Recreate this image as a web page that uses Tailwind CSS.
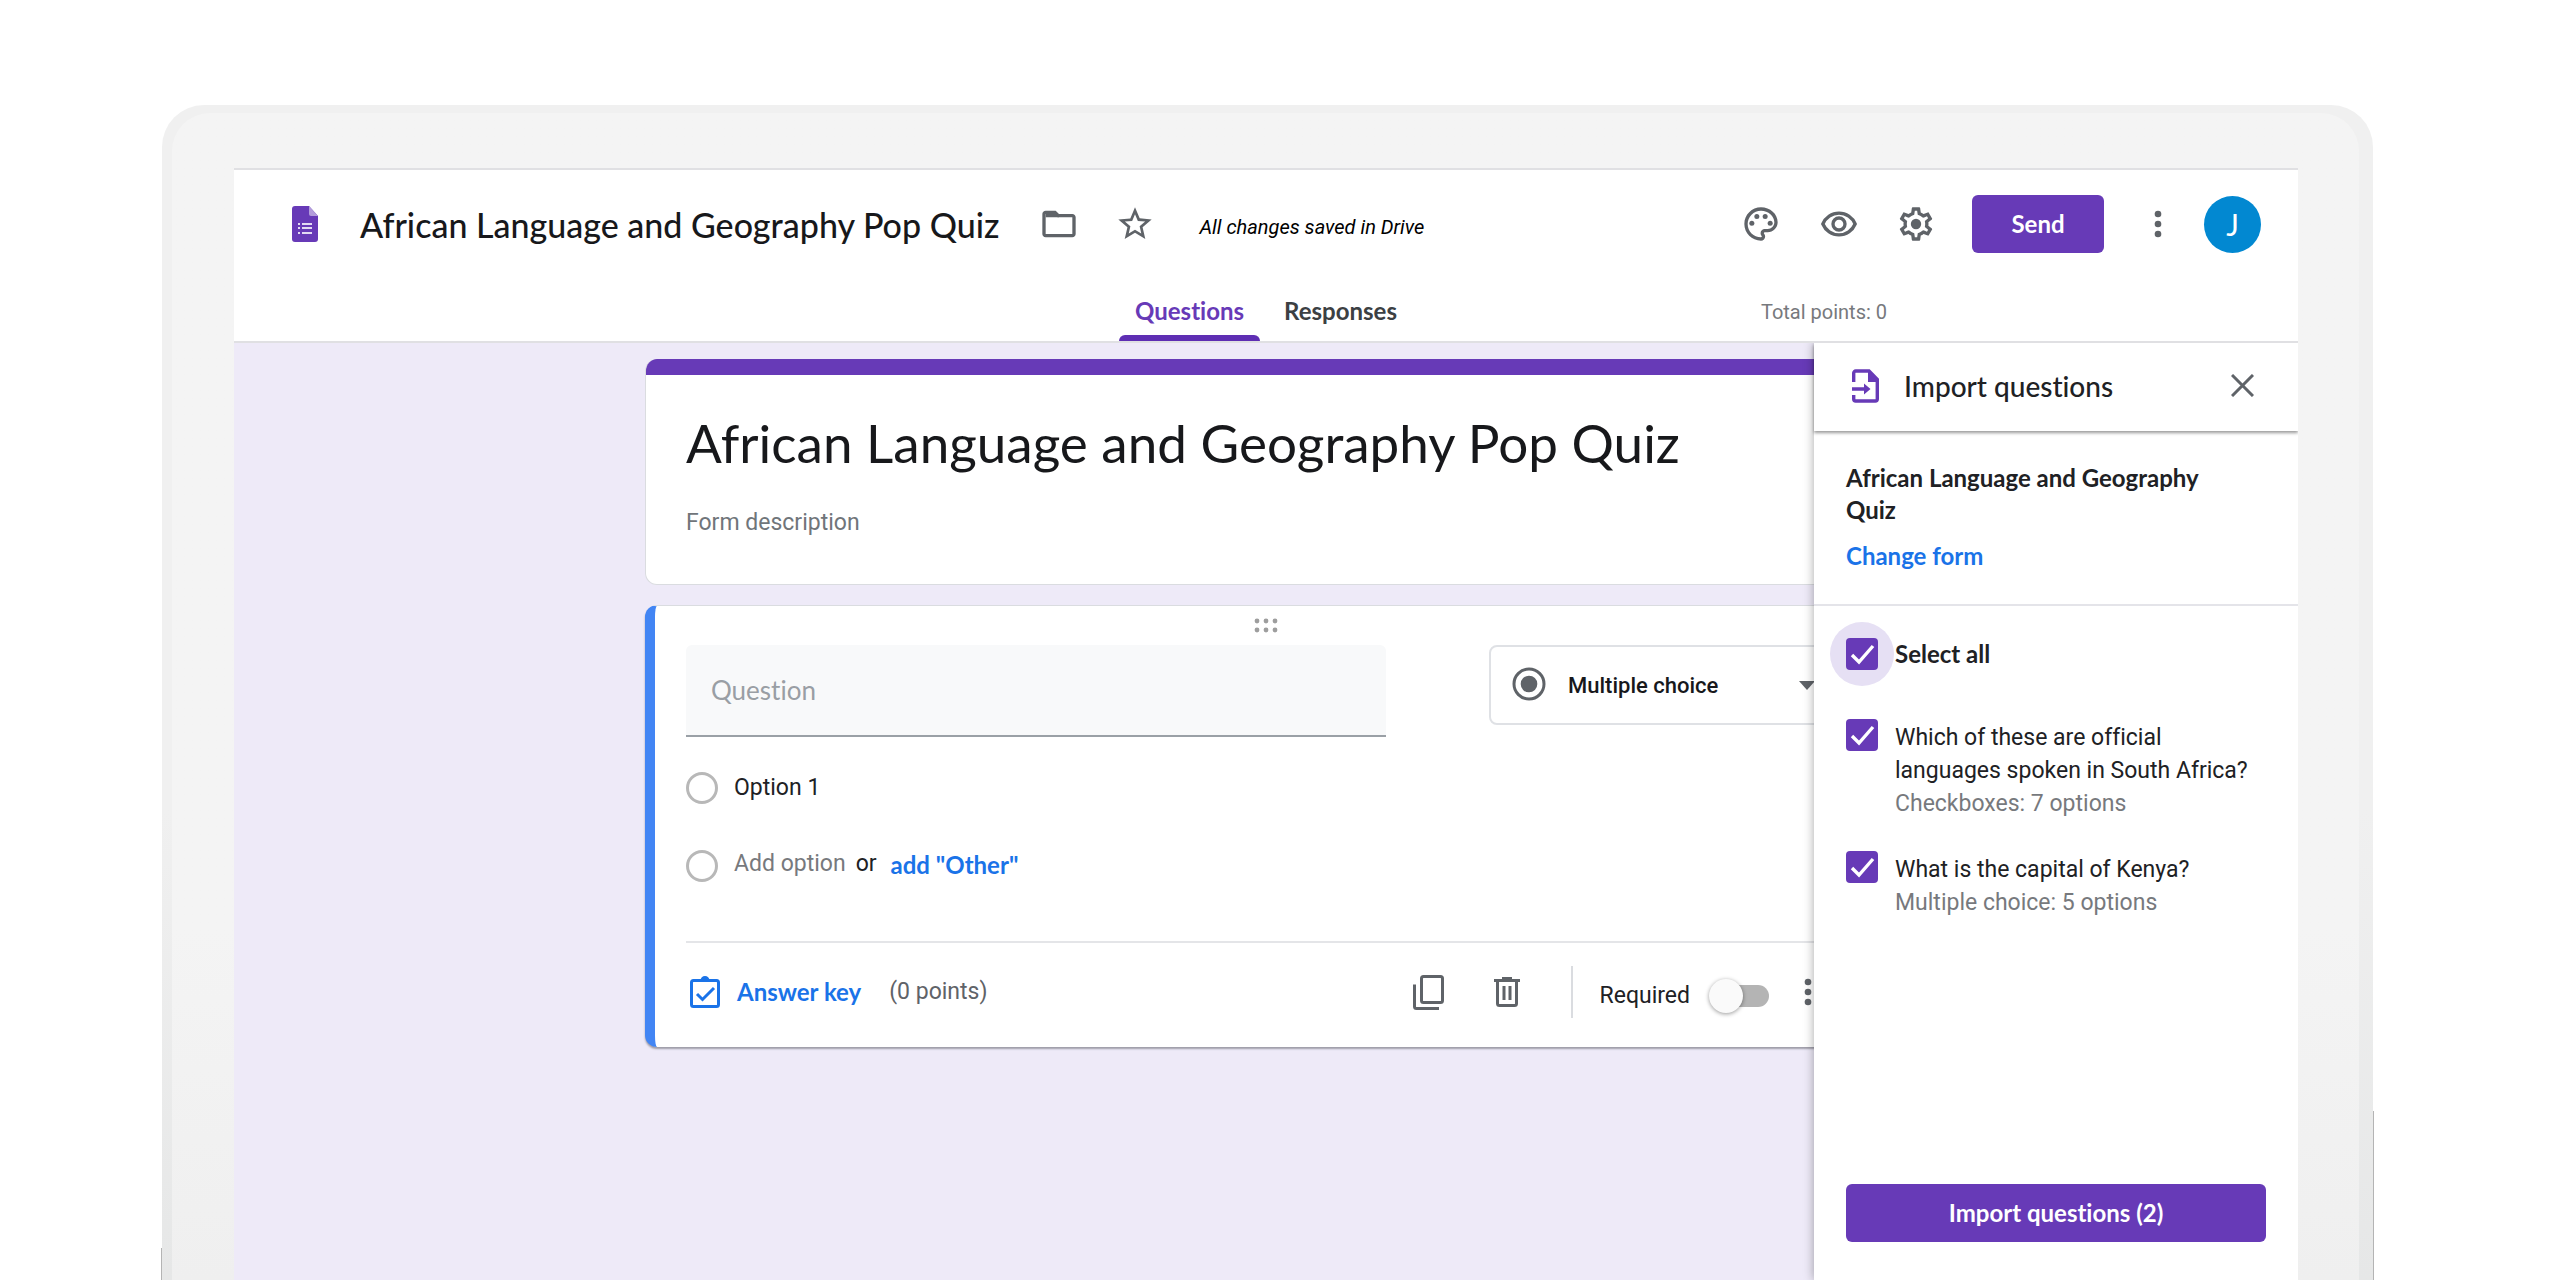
<!DOCTYPE html>
<html lang="en">
<head>
  <meta charset="UTF-8">
  <meta name="viewport" content="width=device-width, initial-scale=1.0">
  <title>African Language and Geography Pop Quiz</title>
  <script src="https://cdn.jsdelivr.net/npm/@tailwindcss/browser@4"></script>
</head>
<body class="bg-white font-['Roboto','Liberation_Sans',sans-serif] text-[#202124] [font-variant-ligatures:none]">

<div class="h-screen min-h-[1180px] overflow-hidden pt-[105px] pl-[162px] pr-[187px]">
  <!-- device frame -->
  <div class="relative h-full rounded-t-[42px] bg-gradient-to-b from-[#f0f0f0] from-60% to-[#e6e7e7] pt-2 pl-[10px] pr-[14px]">
    <span class="absolute bottom-0 -left-px h-8 w-px bg-[#b4b4b4]"></span>
    <span class="absolute bottom-0 -right-px h-[169px] w-px bg-[#b4b4b4]"></span>
    <div class="h-full rounded-t-[38px] bg-gradient-to-b from-[#f4f4f4] from-70% to-[#efefef] pt-[55px] pl-[62px] pr-[61px]">
      <div class="flex h-full flex-col overflow-hidden bg-white">

        <!-- top bar -->
        <header class="border-y-2 border-[#e0e0e3] bg-white">
          <div class="flex h-[108px] items-center pl-[58px] pr-[37px]">
            <svg class="h-9 w-[26px]" viewBox="0 0 26 36">
              <path fill="#673ab7" d="M3 0h14l9 10v23a3 3 0 0 1-3 3H3a3 3 0 0 1-3-3V3a3 3 0 0 1 3-3z"/>
              <path fill="#b39ddb" d="M17 0l9 10h-7a2 2 0 0 1-2-2z"/>
              <path fill="#e3daf3" d="M6 17h2v2H6zm4 0h10v2H10zM6 21h2v2H6zm4 0h10v2H10zM6 26h2v2H6zm4 0h10v2H10z"/>
            </svg>
            <h1 class="ml-[42px] whitespace-nowrap font-['Lato','Liberation_Sans',sans-serif] text-[34px] font-medium text-[#17181b]">African Language and Geography Pop Quiz</h1>
            <button class="ml-10 text-[#5f6368]" aria-label="Move to folder">
              <svg class="size-10" viewBox="0 0 24 24" fill="currentColor"><path d="M9.170 6l2 2H20v10H4V6h5.170M10 4H4c-1.100 0-1.990.900-1.990 2L2 18c0 1.100.900 2 2 2h16c1.100 0 2-.900 2-2V8c0-1.100-.900-2-2-2h-8l-2-2z"/><path d="M4 6h6l2 2H4z"/></svg>
            </button>
            <button class="ml-9 text-[#5f6368]" aria-label="Star">
              <svg class="size-10" viewBox="0 0 24 24" fill="currentColor"><path d="M22 9.240l-7.190-.620L12 2 9.190 8.630 2 9.240l5.460 4.730L5.820 21 12 17.270 18.180 21l-1.630-7.030L22 9.240zM12 15.400l-3.760 2.270 1-4.280-3.320-2.880 4.380-.380L12 6.100l1.710 4.040 4.380.380-3.320 2.880 1 4.280L12 15.400z"/></svg>
            </button>
            <p class="ml-11 mt-[6px] whitespace-nowrap text-xl italic text-black">All changes saved in Drive</p>

            <div class="ml-auto flex items-center">
              <button class="text-[#5f6368]" aria-label="Customize theme">
                <svg class="size-10" viewBox="0 0 24 24" fill="currentColor"><path d="M12 22C6.490 22 2 17.510 2 12S6.490 2 12 2s10 4.040 10 9c0 3.310-2.690 6-6 6h-1.770c-.280 0-.500.220-.500.500 0 .120.050.230.130.330.410.470.640 1.060.640 1.670A2.500 2.500 0 0 1 12 22zm0-18c-4.410 0-8 3.590-8 8s3.590 8 8 8c.280 0 .500-.220.500-.500a.54.54 0 0 0-.140-.350c-.410-.460-.630-1.050-.630-1.650a2.500 2.500 0 0 1 2.500-2.500H16c2.210 0 4-1.790 4-4 0-3.860-3.590-7-8-7z"/><circle cx="6.500" cy="11.500" r="1.500"/><circle cx="9.500" cy="7.500" r="1.500"/><circle cx="14.500" cy="7.500" r="1.500"/><circle cx="17.500" cy="11.500" r="1.500"/></svg>
              </button>
              <button class="ml-[38px] text-[#5f6368]" aria-label="Preview">
                <svg class="size-10" viewBox="0 0 24 24" fill="none" stroke="currentColor" stroke-width="2"><path d="M2.300 12C3.900 8.200 7.700 5.500 12 5.500s8.100 2.700 9.700 6.500c-1.600 3.800-5.400 6.500-9.700 6.500S3.900 15.800 2.300 12z"/><circle cx="12" cy="12" r="3.600"/></svg>
              </button>
              <button class="ml-[37px] text-[#5f6368]" aria-label="Settings">
                <svg class="size-10" viewBox="0 0 24 24" fill="currentColor"><path d="M19.430 12.980c.040-.320.070-.640.070-.980s-.030-.660-.070-.980l2.110-1.650c.190-.150.240-.420.120-.640l-2-3.460c-.090-.160-.260-.250-.440-.250-.060 0-.120.010-.170.030l-2.490 1c-.520-.400-1.080-.730-1.690-.980l-.380-2.650C14.460 2.180 14.250 2 14 2h-4c-.250 0-.460.180-.490.420l-.380 2.650c-.610.250-1.170.590-1.690.980l-2.490-1c-.060-.020-.120-.030-.180-.030-.170 0-.340.090-.430.250l-2 3.460c-.130.220-.070.490.120.640l2.110 1.650c-.040.320-.070.650-.070.980s.030.660.070.980l-2.110 1.650c-.190.150-.240.420-.120.640l2 3.460c.090.160.260.250.440.250.060 0 .120-.010.170-.030l2.490-1c.520.400 1.080.730 1.690.980l.380 2.650c.030.240.240.420.490.420h4c.250 0 .460-.180.490-.420l.380-2.650c.610-.250 1.170-.590 1.690-.980l2.490 1c.060.020.120.030.180.030.170 0 .340-.090.430-.250l2-3.460c.120-.220.070-.490-.120-.640l-2.110-1.650zm-1.980-1.710c.040.310.050.520.050.730 0 .210-.020.430-.050.730l-.140 1.130.890.700 1.080.840-.700 1.210-1.270-.510-1.040-.420-.900.680c-.430.320-.840.560-1.250.730l-1.060.430-.160 1.130-.200 1.350h-1.400l-.190-1.350-.160-1.130-1.060-.430c-.430-.180-.830-.410-1.230-.710l-.910-.700-1.060.430-1.270.510-.700-1.210 1.080-.840.890-.700-.140-1.130c-.030-.310-.050-.540-.050-.740s.020-.430.050-.730l.140-1.130-.890-.700-1.080-.840.700-1.210 1.270.510 1.040.420.900-.680c.430-.320.840-.560 1.250-.730l1.060-.430.160-1.130.200-1.350h1.390l.190 1.350.160 1.130 1.060.430c.430.180.830.410 1.230.710l.910.700 1.060-.430 1.270-.510.700 1.210-1.070.850-.890.700.140 1.130z"/><circle cx="12" cy="12" r="3.100"/></svg>
              </button>
              <button class="ml-9 h-[58px] w-[132px] rounded-md bg-[#673ab7] font-['Lato','Liberation_Sans',sans-serif] text-2xl font-bold text-white">Send</button>
              <button class="ml-[34px] text-[#5f6368]" aria-label="More options">
                <svg class="size-10" viewBox="0 0 24 24" fill="currentColor"><circle cx="12" cy="6" r="2"/><circle cx="12" cy="12" r="2"/><circle cx="12" cy="18" r="2"/></svg>
              </button>
              <button class="ml-[26px] size-[57px] rounded-full bg-[#0288d1] font-['Lato','Liberation_Sans',sans-serif] text-3xl text-white" aria-label="Account">J</button>
            </div>
          </div>

          <nav class="mx-auto grid h-[63px] max-w-[1242px] grid-cols-[1fr_auto_1fr]">
            <span></span>
            <div class="flex gap-2 font-['Lato','Liberation_Sans',sans-serif] text-2xl font-bold">
              <button class="relative px-4 pt-[2px] text-[#673ab7]">Questions<span class="absolute inset-x-0 bottom-0 h-[6px] rounded-t-md bg-[#5e2eb3]"></span></button>
              <button class="px-4 pt-[2px] text-[#3c4043]">Responses</button>
            </div>
            <p class="self-center justify-self-end pt-[5px] text-xl text-[#77797d]">Total points: 0</p>
          </nav>
        </header>

        <div class="relative flex-1 overflow-hidden bg-[#eeeaf8]">
          <main class="mx-auto max-w-[1242px] pt-4">
            <!-- title card -->
            <section class="h-[226px] overflow-hidden rounded-xl border border-[#dadce0] border-t-0 bg-white">
              <div class="h-4 bg-[#673ab7]"></div>
              <div class="px-10 pt-9">
                <input type="text" aria-label="Form title" value="African Language and Geography Pop Quiz" class="block h-16 w-full font-['Lato','Liberation_Sans',sans-serif] text-[53px] text-[#17181b] outline-none">
                <input type="text" aria-label="Form description" placeholder="Form description" class="mt-8 block h-8 w-full text-[23px] outline-none placeholder:text-[#70757a]">
              </div>
            </section>

            <!-- question card -->
            <section class="mt-5 overflow-hidden rounded-xl border-t border-l-[10px] border-t-[#dadce0] border-l-[#4285f4] bg-white pl-[31px] pr-10 shadow-[0_2px_2px_#9e9ca8]">
              <div class="flex h-[39px] items-center justify-center">
                <svg class="h-[15px] w-[25px]" viewBox="0 0 25 15" fill="#9e9e9e"><circle cx="3" cy="3" r="2.400"/><circle cx="12" cy="3" r="2.400"/><circle cx="21" cy="3" r="2.400"/><circle cx="3" cy="12" r="2.400"/><circle cx="12" cy="12" r="2.400"/><circle cx="21" cy="12" r="2.400"/></svg>
              </div>
              <div class="flex items-start justify-between gap-[103px]">
                <input type="text" aria-label="Question" placeholder="Question" class="h-[92px] min-w-0 flex-1 rounded-t-md border-b-2 border-[#9aa0a6] bg-[#f8f9fa] px-[25px] font-['Lato','Liberation_Sans',sans-serif] text-[26px] outline-none placeholder:text-[#999ea4]">
                <div class="relative w-[358px]">
                  <select aria-label="Question type" class="h-20 w-full appearance-none rounded-lg border-2 border-[#dfe1e5] bg-white pl-[77px] text-[22px] font-medium text-[#17181b]">
                    <option>Multiple choice</option>
                    <option>Checkboxes</option>
                  </select>
                  <svg class="pointer-events-none absolute left-5 top-[19px] size-10 text-[#5f6368]" viewBox="0 0 24 24" fill="none" stroke="currentColor" stroke-width="1.800"><circle cx="12" cy="12" r="9"/><circle cx="12" cy="12" r="5" fill="currentColor" stroke="none"/></svg>
                  <svg class="pointer-events-none absolute right-8 top-9 h-[9px] w-4" viewBox="0 0 16 9"><path fill="#5f6368" d="M0 0h16L8 9z"/></svg>
                </div>
              </div>

              <div class="mt-[35px] flex h-8 items-center gap-4 text-[23px]">
                <input type="radio" disabled aria-label="Option 1 choice" class="size-8 appearance-none rounded-full border-3 border-[#b8b8b8]">
                <input type="text" aria-label="Option 1" value="Option 1" class="flex-1 outline-none">
              </div>
              <div class="mt-[46px] flex h-8 items-center text-[23px]">
                <input type="radio" disabled aria-label="New option choice" class="size-8 appearance-none rounded-full border-3 border-[#b8b8b8]">
                <div class="flex items-center pb-[3px]">
                  <button class="ml-4 text-[#77797d]">Add option</button>
                  <span class="ml-[10px]">or</span>
                  <button class="ml-[14px] font-['Lato','Liberation_Sans',sans-serif] text-2xl font-bold text-[#1a73e8]">add "Other"</button>
                </div>
              </div>

              <footer class="mt-[59px] flex h-[106px] items-center border-t-2 border-[#e4e5e8] pb-[6px]">
                <button class="flex items-center font-['Lato','Liberation_Sans',sans-serif] text-2xl font-bold text-[#1a73e8]">
                  <svg class="ml-1 mr-[17px] h-[34px] w-[30px]" viewBox="0 0 30 34" fill="none" stroke="currentColor" stroke-width="3"><rect x="1.500" y="5.500" width="27" height="26" rx="2"/><path d="M10 5.500h2a3 3 0 0 1 6 0h2" /><path d="M7 19l5.500 5.500L24 13"/></svg>
                  Answer key
                </button>
                <span class="ml-[28px] text-[23px] text-[#5f6368]">(0 points)</span>
                <button class="ml-auto text-[#5f6368]" aria-label="Duplicate question">
                  <svg class="h-[35px] w-[31px]" viewBox="0 0 31 35" fill="none" stroke="currentColor" stroke-width="3"><rect x="8.500" y="1.500" width="21" height="26" rx="2"/><path d="M1.500 9.500v22a2 2 0 0 0 2 2H26"/></svg>
                </button>
                <button class="ml-[50px] text-[#5f6368]" aria-label="Delete question">
                  <svg class="h-[30px] w-[26px]" viewBox="0 0 26 30" fill="none" stroke="currentColor" stroke-width="3"><path d="M0 3.500h26M8 1.500h10M3.500 4v22.500a2 2 0 0 0 2 2h15a2 2 0 0 0 2-2V4M10 9v14M16 9v14"/></svg>
                </button>
                <span class="ml-[51px] mr-[27px] h-[52px] w-[2px] bg-[#dadce0]"></span>
                <label class="flex items-center gap-[19px] pt-2 text-[23px]">
                  Required
                  <input type="checkbox" role="switch" class="relative h-[22px] w-[60px] appearance-none before:absolute before:right-0 before:top-0 before:h-[22px] before:w-11 before:rounded-full before:bg-[#b4b4b4] before:content-[''] after:absolute after:-top-[6px] after:left-0 after:size-[34px] after:rounded-full after:bg-[#fafafa] after:shadow-[0_1px_4px_#00000066] after:content-['']">
                </label>
                <button class="ml-[19px] mr-[19px] text-[#5f6368]" aria-label="Question options">
                  <svg class="size-10" viewBox="0 0 24 24" fill="currentColor"><circle cx="12" cy="6" r="2"/><circle cx="12" cy="12" r="2"/><circle cx="12" cy="18" r="2"/></svg>
                </button>
              </footer>
            </section>
          </main>

          <!-- import panel, slides over the form -->
          <aside class="absolute inset-y-0 right-0 flex w-[484px] flex-col bg-white shadow-[0_0_10px_#00000059]">
            <div class="flex h-[88px] items-center pb-[3px] pl-[38px] pr-[44px] shadow-[0_2px_3px_#00000066]">
              <svg class="h-[34px] w-[27px]" viewBox="0 0 27 34" fill="none" stroke="#673ab7" stroke-width="3.400"><path d="M1.700 13V4a2 2 0 0 1 2-2H17l8.300 8.500V30a2 2 0 0 1-2 2H3.700a2 2 0 0 1-2-2v-4M0 20h15"/><path fill="#673ab7" stroke="none" d="M12 14.500l6.500 5.500-6.500 5.500zM16 2h2l8 9v2H16z"/></svg>
              <h2 class="ml-[25px] font-['Lato','Liberation_Sans',sans-serif] text-[28px] font-medium">Import questions</h2>
              <button class="ml-auto text-[#5f6368]" aria-label="Close">
                <svg class="size-[23px]" viewBox="0 0 23 23" fill="none" stroke="currentColor" stroke-width="3"><path d="M1 1l21 21M22 1L1 22"/></svg>
              </button>
            </div>
            <div class="h-[175px] border-b-2 border-[#e4e4e9] px-8 pt-[31px] font-['Lato','Liberation_Sans',sans-serif] text-2xl font-bold leading-8">
              <p class="max-w-[380px]">African Language and Geography Quiz</p>
              <a href="#" class="mt-[14px] inline-block text-[#1a73e8]">Change form</a>
            </div>
            <div class="px-8 pt-8 text-[23px]">
              <label class="flex h-8 items-center gap-[17px] font-['Lato','Liberation_Sans',sans-serif] text-2xl font-bold">
                <span class="relative size-8 shrink-0 rounded-full bg-[#e6e0f4] ring-16 ring-[#e6e0f4]">
                  <input type="checkbox" checked class="block size-8 appearance-none rounded-[4px] bg-[#673ab7]">
                  <svg class="pointer-events-none absolute inset-0" viewBox="0 0 32 32" fill="none" stroke="#fff" stroke-width="3.400"><path d="M6 17l7 7L27 8"/></svg>
                </span>
                Select all
              </label>
              <label class="mt-[49px] flex items-start gap-[17px]">
                <span class="relative size-8 shrink-0">
                  <input type="checkbox" checked class="block size-8 appearance-none rounded-[4px] bg-[#673ab7]">
                  <svg class="pointer-events-none absolute inset-0" viewBox="0 0 32 32" fill="none" stroke="#fff" stroke-width="3.400"><path d="M6 17l7 7L27 8"/></svg>
                </span>
                <span class="pt-[2px] leading-[33px]">
                  <span class="block">Which of these are official<br>languages spoken in South Africa?</span>
                  <span class="block text-[#77797d]">Checkboxes: 7 options</span>
                </span>
              </label>
              <label class="mt-[31px] flex items-start gap-[17px]">
                <span class="relative size-8 shrink-0">
                  <input type="checkbox" checked class="block size-8 appearance-none rounded-[4px] bg-[#673ab7]">
                  <svg class="pointer-events-none absolute inset-0" viewBox="0 0 32 32" fill="none" stroke="#fff" stroke-width="3.400"><path d="M6 17l7 7L27 8"/></svg>
                </span>
                <span class="pt-[2px] leading-[33px]">
                  <span class="block">What is the capital of Kenya?</span>
                  <span class="block text-[#77797d]">Multiple choice: 5 options</span>
                </span>
              </label>
            </div>
            <button class="mx-8 mt-auto mb-[38px] h-[58px] rounded-md bg-[#673ab7] font-['Lato','Liberation_Sans',sans-serif] text-2xl font-bold text-white">Import questions (2)</button>
          </aside>
        </div>

      </div>
    </div>
  </div>
</div>

</body>
</html>
